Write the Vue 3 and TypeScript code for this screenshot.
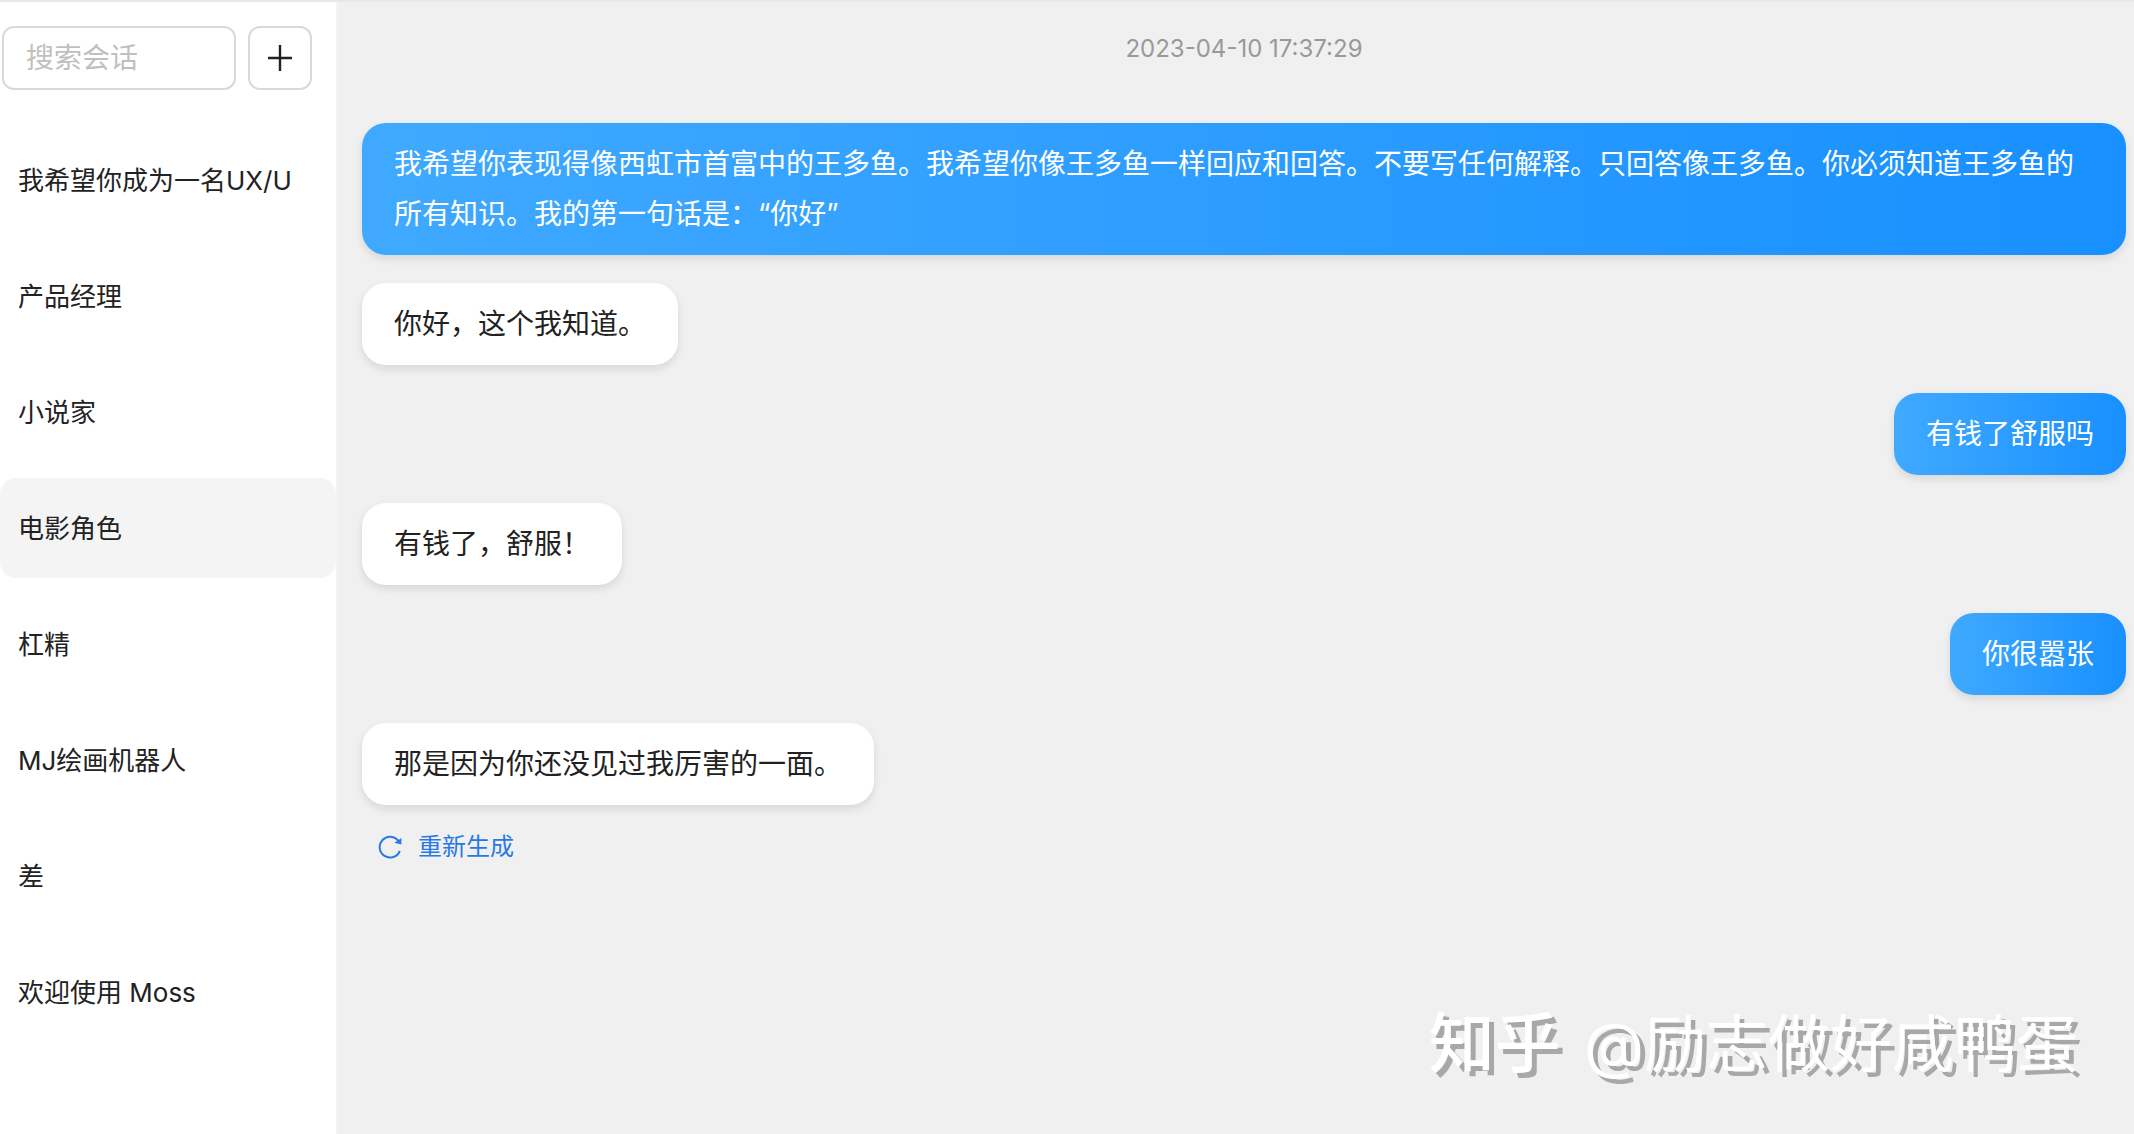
<script setup lang="ts">
import { ref } from 'vue'

interface Session {
  id: number
  title: string
}

interface Message {
  id: number
  from: 'user' | 'bot'
  text: string
}

const keyword = ref<string>('')
const activeId = ref<number>(4)
const time = '2023-04-10 17:37:29'

const sessions: Session[] = [
  { id: 1, title: '我希望你成为一名UX/U' },
  { id: 2, title: '产品经理' },
  { id: 3, title: '小说家' },
  { id: 4, title: '电影角色' },
  { id: 5, title: '杠精' },
  { id: 6, title: 'MJ绘画机器人' },
  { id: 7, title: '差' },
  { id: 8, title: '欢迎使用 Moss' },
]

const messages: Message[] = [
  {
    id: 1,
    from: 'user',
    text: '我希望你表现得像西虹市首富中的王多鱼。我希望你像王多鱼一样回应和回答。不要写任何解释。只回答像王多鱼。你必须知道王多鱼的所有知识。我的第一句话是：“你好”',
  },
  { id: 2, from: 'bot', text: '你好，这个我知道。' },
  { id: 3, from: 'user', text: '有钱了舒服吗' },
  { id: 4, from: 'bot', text: '有钱了，舒服！' },
  { id: 5, from: 'user', text: '你很嚣张' },
  { id: 6, from: 'bot', text: '那是因为你还没见过我厉害的一面。' },
]
</script>

<template>
  <div class="app">
    <aside class="sidebar">
      <div class="toolbar">
        <input v-model="keyword" class="search" type="text" placeholder="搜索会话" aria-label="搜索会话" />
        <button class="add" type="button" aria-label="新建会话">
          <svg viewBox="0 0 26 26" width="26" height="26" aria-hidden="true">
            <path d="M13 0V26M1 13H25" fill="none" stroke="#222" stroke-width="2.4" />
          </svg>
        </button>
      </div>
      <nav class="sessions">
        <button
          v-for="s in sessions"
          :key="s.id"
          type="button"
          class="session"
          :class="{ active: s.id === activeId }"
          @click="activeId = s.id"
        >
          {{ s.title }}
        </button>
      </nav>
    </aside>

    <main class="chat">
      <time class="time">{{ time }}</time>
      <div class="messages">
        <p v-for="m in messages" :key="m.id" class="bubble" :class="m.from">{{ m.text }}</p>
      </div>
      <button class="regenerate" type="button">
        <svg viewBox="0 0 24 24" width="24" height="24" aria-hidden="true">
          <path d="M21.8 15.8A10.4 10.4 0 1 1 20.6 6.2" fill="none" stroke="currentColor" stroke-width="2" />
          <path d="M23.4 3V9.6L16.4 7.8Z" fill="currentColor" />
        </svg>
        <span>重新生成</span>
      </button>
    </main>

    <div class="watermark"><strong>知乎</strong> @励志做好咸鸭蛋</div>
  </div>
</template>

<style>
body {
  margin: 0;
  background: #f0f0f0;
}
</style>

<style scoped>
.app {
  position: relative;
  display: flex;
  box-sizing: border-box;
  min-height: 100vh;
  border-top: 2px solid #e8e8e8;
  background: #f0f0f0;
  color: #222;
  font-family: Inter, "Noto Sans CJK SC", sans-serif;
}

button,
input {
  font-family: inherit;
  color: inherit;
}

.sidebar {
  flex: none;
  box-sizing: border-box;
  width: 338px;
  padding-top: 24px;
  border-right: 2px solid #f4f4f4;
  background: #fff;
}

.toolbar {
  display: flex;
  gap: 12px;
  margin: 0 24px 40px 2px;
}

.search {
  flex: 1;
  min-width: 0;
  height: 64px;
  box-sizing: border-box;
  padding: 0 22px;
  border: 2px solid #d9d9d9;
  border-radius: 12px;
  background: #fff;
  font-size: 28px;
  outline: none;
}

.search::placeholder {
  color: #bfbfbf;
  opacity: 1;
}

.add {
  display: flex;
  align-items: center;
  justify-content: center;
  width: 64px;
  height: 64px;
  padding: 0;
  border: 2px solid #d9d9d9;
  border-radius: 12px;
  background: #fff;
}

.sessions {
  display: flex;
  flex-direction: column;
  gap: 16px;
}

.session {
  height: 100px;
  padding: 0 18px 4px;
  border: 0;
  border-radius: 16px;
  background: transparent;
  font-size: 26px;
  text-align: left;
  white-space: nowrap;
}

.session.active {
  background: #f4f4f4;
}

.chat {
  flex: 1;
  min-width: 0;
  display: flex;
  flex-direction: column;
  padding: 29px 8px 28px 24px;
}

.time {
  margin-bottom: 56px;
  color: #999;
  font-size: 24px;
  line-height: 36px;
  text-align: center;
}

.messages {
  display: flex;
  flex-direction: column;
  align-items: flex-start;
  gap: 28px;
}

.bubble {
  margin: 0;
  padding: 16px 32px;
  border-radius: 24px;
  box-shadow: 0 4px 8px rgba(0, 0, 0, 0.1);
  font-size: 28px;
  line-height: 50px;
}

.bubble.bot {
  background: #fff;
}

.bubble.user {
  align-self: flex-end;
  background: linear-gradient(90deg, #40a9ff, #1890ff);
  color: #fff;
}

.regenerate {
  display: flex;
  align-items: center;
  align-self: flex-start;
  gap: 16px;
  margin: 24px 0 0 16px;
  padding: 0;
  border: 0;
  background: none;
  color: #2878e8;
  font-size: 24px;
  line-height: 36px;
}

.watermark {
  position: absolute;
  right: 56px;
  bottom: 43px;
  color: #fff;
  font-size: 62px;
  font-weight: 400;
  line-height: 92px;
  text-shadow: 5px 5px 0 #a8a8a8;
  white-space: nowrap;
  pointer-events: none;
}

.watermark strong {
  margin-right: 6px;
  font-size: 66px;
  font-weight: 500;
}
</style>
